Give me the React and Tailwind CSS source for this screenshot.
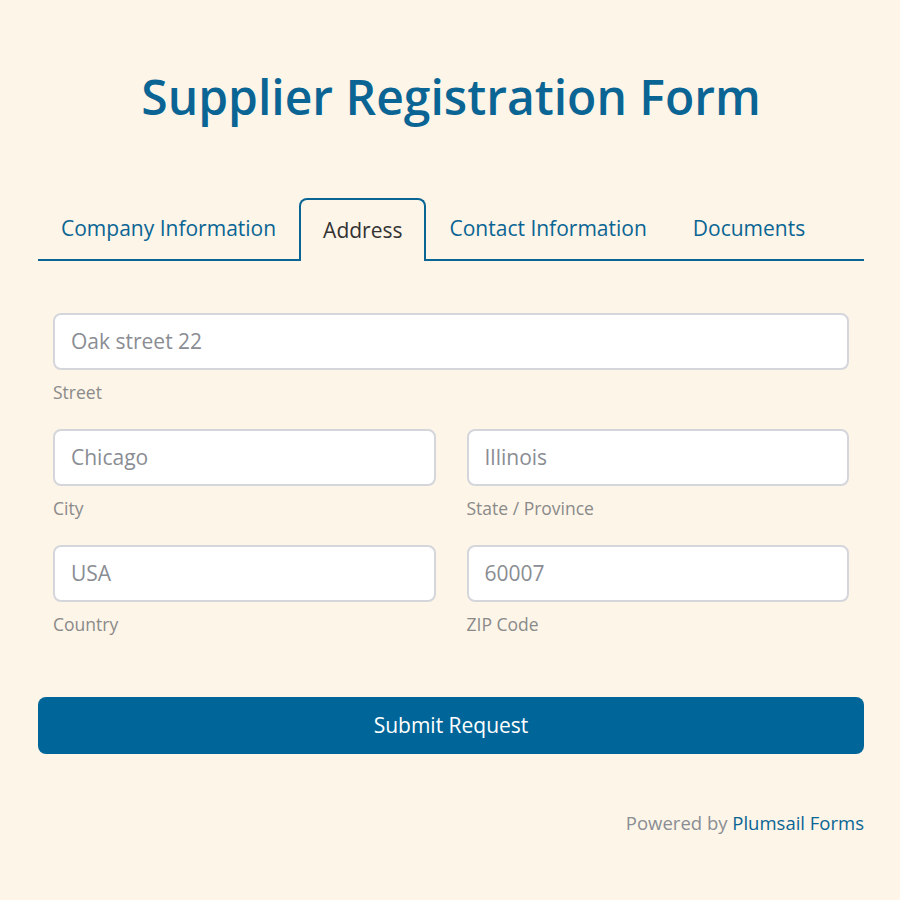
import React from "react";

const tabs = ["Company Information", "Address", "Contact Information", "Documents"];

function Field({ value, label }) {
  return (
    <div className="flex flex-col">
      <div className="h-[57px] rounded-lg border-2 border-[#d4d6dc] bg-white px-[16px] flex items-center text-[21px] text-[#8a8d93]">
        {value}
      </div>
      <div className="mt-[10px] text-[17.5px] leading-[24px] text-[#8a8a8a]">{label}</div>
    </div>
  );
}

export default function App() {
  return (
    <div
      className="min-h-[900px] bg-[#fdf5e8] pl-[38px] pr-[36px] pt-[66px]"
      style={{ fontFamily: '"Open Sans", "Noto Sans", sans-serif' }}
    >
      <h1 className="text-center text-[48px] font-semibold text-[#0a6594] leading-[62px]">
        Supplier Registration Form
      </h1>

      <div className="mt-[70px] flex border-b-2 border-[#0a6594]">
        {tabs.map((t, i) =>
          i === 1 ? (
            <div
              key={t}
              className="-mb-[2px] h-[63px] px-[22px] flex items-center rounded-t-lg border-2 border-b-0 border-[#0a6594] bg-[#fdf5e8] text-[21px] text-[#333]"
            >
              {t}
            </div>
          ) : (
            <div key={t} className="h-[61px] px-[23px] pt-[1px] flex items-center text-[21px] text-[#0a6594]">
              {t}
            </div>
          )
        )}
      </div>

      <div className="px-[15px] pt-[52px] flex flex-col gap-[25px]">
        <Field value="Oak street 22" label="Street" />
        <div className="grid grid-cols-2 gap-[31px]">
          <Field value="Chicago" label="City" />
          <Field value="Illinois" label="State / Province" />
        </div>
        <div className="grid grid-cols-2 gap-[31px]">
          <Field value="USA" label="Country" />
          <Field value="60007" label="ZIP Code" />
        </div>
      </div>

      <button className="mt-[61px] w-full h-[57px] rounded-lg bg-[#006699] text-white text-[21px]">
        Submit Request
      </button>

      <div className="mt-[57px] text-right text-[18.5px] leading-[24px] text-[#8a8d93]">
        Powered by <span className="text-[#0a6594]">Plumsail Forms</span>
      </div>
    </div>
  );
}
